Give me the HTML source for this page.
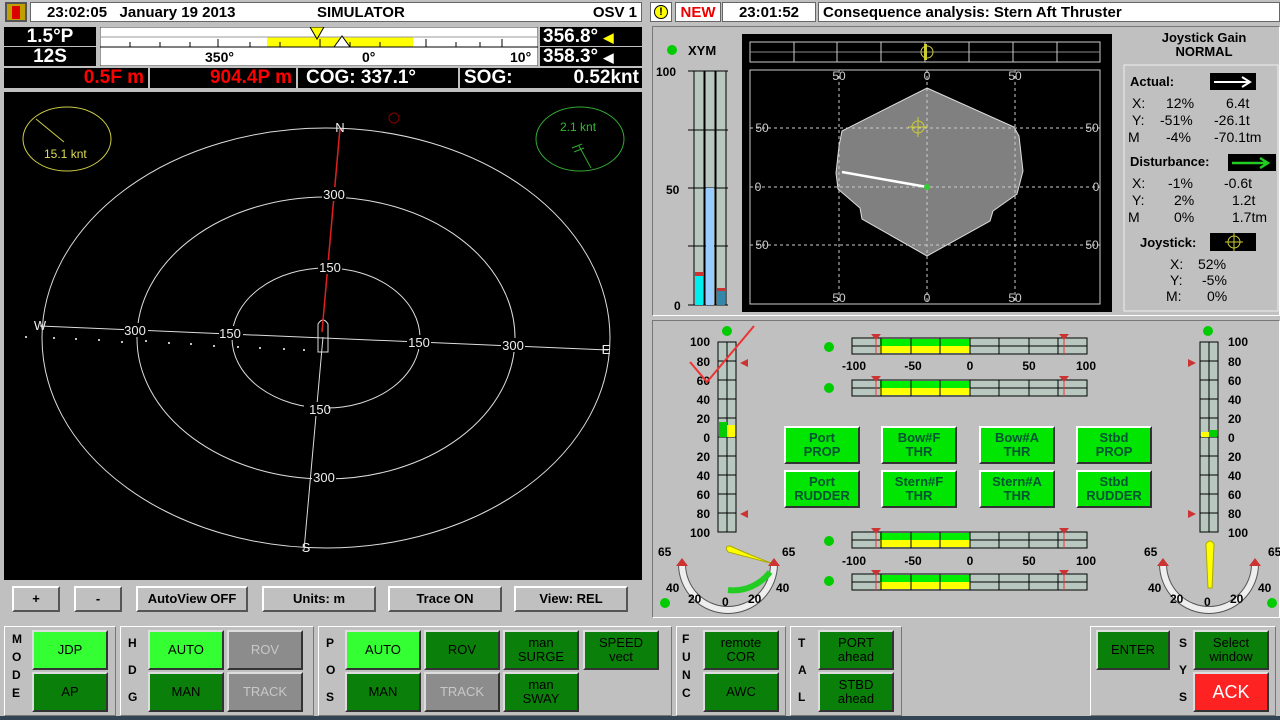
<!DOCTYPE html>
<html><head><meta charset="utf-8"><style>
*{margin:0;padding:0;box-sizing:border-box}
body{width:1280px;height:720px;background:#c0c0c0;position:relative;overflow:hidden;font-family:"Liberation Sans",Arial,sans-serif}
.a{position:absolute}
.blk{position:absolute;background:#000;color:#fff;font-weight:bold;font-size:19px;line-height:20px;white-space:nowrap}
.btn{position:absolute;background:#c0c0c0;border:2px solid;border-color:#fff #555 #555 #fff;font-size:13px;font-weight:bold;color:#000;text-align:center;line-height:22px}
.g{position:absolute;border:2px solid;border-color:#ddd #333 #333 #ddd;font-family:"Liberation Sans Narrow","Liberation Sans",sans-serif;font-size:13px;text-align:center;color:#000;display:flex;align-items:center;justify-content:center;line-height:14px}
.lg{background:#33ff33}.dg{background:#0a800a}.gr{background:#8c8c8c;color:#c8c8c8}
.tb{position:absolute;background:#00e600;border:2px solid;border-color:#fff #333 #333 #fff;font-size:13px;font-weight:bold;text-align:center;line-height:14px;padding-top:3px;color:#053}
.grp{position:absolute;border:1px solid;border-color:#fff #777 #777 #fff;top:626px;height:90px}
.let{position:absolute;font-size:12px;font-weight:bold}
</style></head><body>
<div class="a" style="left:0;top:0;width:1280px;height:24px;background:#c0c0c0"></div>
<div class="a" style="left:5px;top:2px;width:22px;height:20px;background:#c0a000;border:2px solid #555"><div style="margin:2px 0 0 5px;width:8px;height:13px;background:#d00"></div></div>
<div class="a" style="left:30px;top:2px;width:612px;height:20px;background:#fff;border:1px solid #666;font-size:15px;font-weight:bold;line-height:19px;white-space:nowrap">
<span style="position:absolute;left:16px">23:02:05&nbsp;&nbsp;&nbsp;January 19 2013</span><span style="position:absolute;left:286px">SIMULATOR</span><span style="position:absolute;right:4px">OSV 1</span></div>
<div class="a" style="left:650px;top:2px;width:22px;height:20px;background:#fff;border:1px solid #666"><div style="margin:2px 0 0 3px;width:14px;height:14px;border-radius:50%;background:#ff0;border:1px solid #000;font-size:11px;font-weight:bold;text-align:center;line-height:12px">!</div></div>
<div class="a" style="left:675px;top:2px;width:46px;height:20px;background:#fff;border:1px solid #666;color:#e00;font-size:15px;font-weight:bold;line-height:19px;text-align:center">NEW</div>
<div class="a" style="left:722px;top:2px;width:94px;height:20px;background:#fff;border:1px solid #666;font-size:15px;font-weight:bold;line-height:19px;text-align:center">23:01:52</div>
<div class="a" style="left:818px;top:2px;width:462px;height:20px;background:#fff;border:1px solid #666;font-size:15px;font-weight:bold;line-height:19px;padding-left:4px">Consequence analysis: Stern Aft Thruster</div>

<div class="blk" style="left:4px;top:27px;width:92px;height:19px;text-align:center">1.5°P</div>
<div class="blk" style="left:4px;top:47px;width:92px;height:19px;text-align:center">12S</div>
<div class="blk" style="left:540px;top:27px;width:102px;height:19px;padding-left:3px">356.8° <span style="color:#ff0;font-size:13px">◀</span></div>
<div class="blk" style="left:540px;top:47px;width:102px;height:19px;padding-left:3px">358.3° <span style="font-size:13px">◀</span></div>
<svg class="a" style="left:100px;top:27px" width="438" height="39">
<rect width="438" height="39" fill="#fff" stroke="#333"/>
<rect x="167" y="10" width="146" height="10" fill="#ff0"/>
<line x1="0" y1="20" x2="438" y2="20" stroke="#000"/>
<g stroke="#000"><line x1="0" y1="10" x2="438" y2="10" stroke="#999"/>
<path d="M118 12v8M220 12v8M326 12v8M402 12v8M30 15v5M60 15v5M90 15v5M150 15v5M180 15v5M250 15v5M280 15v5M356 15v5M380 15v5"/></g>
<polygon points="210,0 224,0 217,12" fill="#ff0" stroke="#000"/>
<polygon points="242,9 234,20 250,20" fill="#fff" stroke="#000"/>
<g font-size="14" font-weight="bold" font-family="Liberation Sans"><text x="105" y="35">350°</text><text x="262" y="35">0°</text><text x="410" y="35">10°</text></g>
</svg>
<div class="blk" style="left:4px;top:68px;width:144px;height:20px;color:#f00;text-align:right;padding-right:4px">0.5F m</div>
<div class="blk" style="left:150px;top:68px;width:146px;height:20px;color:#f00;text-align:right;padding-right:4px">904.4P m</div>
<div class="blk" style="left:298px;top:68px;width:160px;height:20px;padding-left:8px">COG: 337.1°</div>
<div class="blk" style="left:460px;top:68px;width:182px;height:20px;padding-left:4px">SOG:<span style="position:absolute;right:3px">0.52knt</span></div>

<svg class="a" style="left:4px;top:92px" width="638" height="488" font-family="Liberation Sans" font-size="13">
<rect width="638" height="488" fill="#000"/>
<g fill="none" stroke="#ddd" stroke-width="1">
<ellipse cx="322" cy="246" rx="284" ry="210"/>
<ellipse cx="322" cy="246" rx="189" ry="141"/>
<ellipse cx="322" cy="246" rx="94" ry="70"/>
<line x1="36" y1="234" x2="604" y2="258"/>
<line x1="319" y1="245" x2="300" y2="458"/>
<path d="M314 242 v-10 q5 -8 10 0 v28 h-10z"/>
</g>
<line x1="336" y1="36" x2="318" y2="240" stroke="#e02020" stroke-width="1.5"/>
<g fill="#eee" text-anchor="middle">
<rect x="318" y="95" width="24" height="14" fill="#000"/><text x="330" y="107">300</text>
<rect x="314" y="168" width="24" height="14" fill="#000"/><text x="326" y="180">150</text>
<rect x="308" y="378" width="24" height="14" fill="#000"/><text x="320" y="390">300</text>
<rect x="300" y="310" width="24" height="14" fill="#000"/><text x="316" y="322">150</text>
<rect x="120" y="231" width="24" height="14" fill="#000"/><text x="131" y="243">300</text>
<rect x="215" y="234" width="24" height="14" fill="#000"/><text x="226" y="246">150</text>
<rect x="403" y="243" width="24" height="14" fill="#000"/><text x="415" y="255">150</text>
<rect x="497" y="246" width="24" height="14" fill="#000"/><text x="509" y="258">300</text>
<text x="336" y="40">N</text><text x="302" y="460">S</text><text x="36" y="238">W</text><text x="602" y="262">E</text>
</g>
<g fill="#fff"><circle cx="22" cy="245" r="1"/><circle cx="50" cy="246" r="1"/><circle cx="72" cy="247" r="1"/><circle cx="95" cy="248" r="1"/><circle cx="118" cy="250" r="1"/><circle cx="142" cy="249" r="1"/><circle cx="165" cy="251" r="1"/><circle cx="187" cy="252" r="1"/><circle cx="210" cy="254" r="1"/><circle cx="234" cy="255" r="1"/><circle cx="256" cy="256" r="1"/><circle cx="280" cy="257" r="1"/><circle cx="300" cy="258" r="1"/></g>
<ellipse cx="63" cy="47" rx="44" ry="32" fill="none" stroke="#cc4"/>
<line x1="32" y1="27" x2="60" y2="50" stroke="#cc4"/>
<text x="40" y="66" fill="#dd5" font-size="12">15.1 knt</text>
<ellipse cx="576" cy="47" rx="44" ry="32" fill="none" stroke="#3a3"/>
<path d="M568 56 l10 -4 M570 60 l10 -4 M575 54 l12 22" stroke="#3a3" fill="none"/>
<text x="556" y="39" fill="#3b3" font-size="12">2.1 knt</text>
<circle cx="390" cy="26" r="5" fill="none" stroke="#800"/>
</svg>
<div class="a" style="left:4px;top:582px;width:638px;height:36px;background:#c0c0c0"></div>
<div class="btn" style="left:12px;top:586px;width:48px;height:26px">+</div>
<div class="btn" style="left:74px;top:586px;width:48px;height:26px">-</div>
<div class="btn" style="left:136px;top:586px;width:112px;height:26px">AutoView OFF</div>
<div class="btn" style="left:262px;top:586px;width:114px;height:26px">Units: m</div>
<div class="btn" style="left:388px;top:586px;width:114px;height:26px">Trace ON</div>
<div class="btn" style="left:514px;top:586px;width:114px;height:26px">View: REL</div>

<div class="a" style="left:652px;top:26px;width:628px;height:290px;border:1px solid;border-color:#777 #fff #fff #777"></div>
<svg class="a" style="left:652px;top:26px" width="628" height="292" font-family="Liberation Sans" font-weight="bold" font-size="13">
<circle cx="20" cy="24" r="5" fill="#0c0"/><text x="36" y="29" font-size="13">XYM</text>
<text x="4" y="50" font-size="12">100</text><text x="14" y="168" font-size="12">50</text><text x="22" y="284" font-size="12">0</text>
<g stroke="#000"><rect x="42" y="45" width="10" height="234" fill="#b8c8c0"/><rect x="53" y="45" width="10" height="234" fill="#b8c8c0"/><rect x="64" y="45" width="10" height="234" fill="#b8c8c0"/>
<line x1="36" y1="45" x2="76" y2="45"/><line x1="36" y1="104" x2="76" y2="104"/><line x1="36" y1="162" x2="76" y2="162"/><line x1="36" y1="220" x2="76" y2="220"/><line x1="36" y1="279" x2="76" y2="279"/></g>
<rect x="43" y="250" width="8" height="29" fill="#0ee"/><rect x="43" y="246" width="8" height="4" fill="#c33"/>
<rect x="54" y="162" width="8" height="117" fill="#9cf"/>
<rect x="65" y="265" width="8" height="14" fill="#38a"/><rect x="65" y="262" width="8" height="3" fill="#c33"/>
<rect x="90" y="8" width="370" height="278" fill="#000"/>
<rect x="98" y="16" width="350" height="20" fill="none" stroke="#ccc"/><line x1="98" y1="26" x2="448" y2="26" stroke="#888"/>
<path d="M142 16v20M185 16v20M229 16v20M273 16v20M317 16v20M361 16v20M405 16v20" stroke="#ccc"/>
<circle cx="275" cy="26" r="6" fill="none" stroke="#cc3"/><rect x="272" y="18" width="3" height="16" fill="#cc3"/>
<rect x="98" y="44" width="350" height="234" fill="none" stroke="#ccc"/>
<polygon points="275,62 362,101 367,110 371,145 365,168 341,185 338,195 275,230 210,193 208,182 186,163 184,147 187,120 190,105" fill="#808080" stroke="#ddd"/>
<g stroke="#ccc" stroke-dasharray="3,3"><line x1="187" y1="44" x2="187" y2="278"/><line x1="275" y1="44" x2="275" y2="278"/><line x1="363" y1="44" x2="363" y2="278"/>
<line x1="98" y1="102" x2="448" y2="102"/><line x1="98" y1="161" x2="448" y2="161"/><line x1="98" y1="219" x2="448" y2="219"/></g>
<g fill="#ccc" font-weight="normal" font-size="12" text-anchor="middle"><text x="187" y="54">50</text><text x="275" y="54">0</text><text x="363" y="54">50</text>
<text x="187" y="276">50</text><text x="275" y="276">0</text><text x="363" y="276">50</text>
<text x="110" y="106">50</text><text x="440" y="106">50</text><text x="106" y="165">0</text><text x="444" y="165">0</text><text x="110" y="223">50</text><text x="440" y="223">50</text></g>
<line x1="275" y1="161" x2="190" y2="146" stroke="#fff" stroke-width="2.5"/><circle cx="275" cy="161" r="3" fill="#3c3"/>
<circle cx="266" cy="101" r="6" fill="none" stroke="#cc3"/><path d="M256 101h20M266 91v20" stroke="#cc3"/>
<text x="552" y="16" text-anchor="middle">Joystick Gain</text><text x="552" y="30" text-anchor="middle">NORMAL</text>
<rect x="472" y="39" width="154" height="246" fill="none" stroke="#eee"/>
<text x="478" y="60">Actual:</text><rect x="558" y="47" width="46" height="17" fill="#000"/><path d="M562 56h36M590 51l8 5-8 5" stroke="#fff" stroke-width="2" fill="none"/>
<g font-weight="normal" font-size="14"><text x="480" y="82">X:</text><text x="480" y="99">Y:</text><text x="476" y="116">M</text>
<text x="514" y="82">12%</text><text x="508" y="99">-51%</text><text x="514" y="116">-4%</text>
<text x="574" y="82">6.4t</text><text x="562" y="99">-26.1t</text><text x="562" y="116">-70.1tm</text>
<text x="480" y="162">X:</text><text x="480" y="179">Y:</text><text x="476" y="196">M</text>
<text x="516" y="162">-1%</text><text x="522" y="179">2%</text><text x="522" y="196">0%</text>
<text x="572" y="162">-0.6t</text><text x="580" y="179">1.2t</text><text x="580" y="196">1.7tm</text>
<text x="518" y="243">X:</text><text x="518" y="259">Y:</text><text x="514" y="275">M:</text>
<text x="546" y="243">52%</text><text x="550" y="259">-5%</text><text x="555" y="275">0%</text></g>
<text x="478" y="140">Disturbance:</text><rect x="576" y="128" width="48" height="17" fill="#000"/><path d="M580 137h36M608 132l8 5-8 5" stroke="#2c2" stroke-width="2.5" fill="none"/>
<text x="488" y="221">Joystick:</text><rect x="558" y="207" width="46" height="18" fill="#000"/><circle cx="582" cy="216" r="6" fill="none" stroke="#cc3"/><path d="M573 216h18M582 207v18" stroke="#cc3"/>
</svg>

<div class="a" style="left:652px;top:320px;width:628px;height:298px;border:1px solid;border-color:#777 #fff #fff #777"></div>
<svg class="a" style="left:652px;top:320px" width="628" height="298" font-family="Liberation Sans" font-weight="bold" font-size="12">
<g text-anchor="end"><text x="58" y="26">100</text><text x="58" y="46">80</text><text x="58" y="65">60</text><text x="58" y="84">40</text><text x="58" y="103">20</text><text x="58" y="122">0</text><text x="58" y="141">20</text><text x="58" y="160">40</text><text x="58" y="179">60</text><text x="58" y="198">80</text><text x="58" y="217">100</text></g>
<g text-anchor="start"><text x="576" y="26">100</text><text x="576" y="46">80</text><text x="576" y="65">60</text><text x="576" y="84">40</text><text x="576" y="103">20</text><text x="576" y="122">0</text><text x="576" y="141">20</text><text x="576" y="160">40</text><text x="576" y="179">60</text><text x="576" y="198">80</text><text x="576" y="217">100</text></g>
<g stroke="#000"><rect x="66" y="22" width="9" height="190" fill="#b8c8c0"/><rect x="75" y="22" width="9" height="190" fill="#b8c8c0"/>
<rect x="548" y="22" width="9" height="190" fill="#b8c8c0"/><rect x="557" y="22" width="9" height="190" fill="#b8c8c0"/>
<path d="M66 41h18M66 60h18M66 79h18M66 98h18M66 117h18M66 136h18M66 155h18M66 174h18M66 193h18M548 41h18M548 60h18M548 79h18M548 98h18M548 117h18M548 136h18M548 155h18M548 174h18M548 193h18"/></g>
<rect x="67" y="102" width="8" height="15" fill="#0c0"/><rect x="75" y="105" width="8" height="12" fill="#ff0"/>
<rect x="549" y="112" width="8" height="5" fill="#ff0"/><rect x="557" y="110" width="8" height="7" fill="#0c0"/>
<g fill="#c33"><path d="M88 43l8-4v8zM88 194l8-4v8zM544 43l-8-4v8zM544 194l-8-4v8z"/></g>
<g fill="#0c0"><circle cx="75" cy="11" r="5"/><circle cx="556" cy="11" r="5"/><circle cx="177" cy="27" r="5"/><circle cx="177" cy="68" r="5"/><circle cx="177" cy="221" r="5"/><circle cx="177" cy="261" r="5"/><circle cx="13" cy="283" r="5"/><circle cx="620" cy="283" r="5"/></g>
<path d="M38 42 L55 62 L102 6" stroke="#e33" stroke-width="2" fill="none"/>
<g id="hb">
<rect x="200" y="18" width="235" height="16" fill="#b8c8c0" stroke="#000"/><line x1="200" y1="26" x2="435" y2="26" stroke="#000"/>
<rect x="228" y="19" width="90" height="7" fill="#0e0"/><rect x="228" y="26" width="90" height="7" fill="#ff0"/>
<path d="M229 18v16M259 18v16M288 18v16M318 18v16M347 18v16M377 18v16M406 18v16" stroke="#000"/>
<path d="M224 14v20M412 14v20" stroke="#e33"/><path d="M219 14h10l-5 6zM407 14h10l-5 6z" fill="#c33"/>
</g>
<use href="#hb" y="42"/>
<use href="#hb" y="194"/><use href="#hb" y="236"/>
<g text-anchor="middle" font-size="12"><text x="202" y="50">-100</text><text x="261" y="50">-50</text><text x="318" y="50">0</text><text x="377" y="50">50</text><text x="434" y="50">100</text>
<text x="202" y="245">-100</text><text x="261" y="245">-50</text><text x="318" y="245">0</text><text x="377" y="245">50</text><text x="434" y="245">100</text></g>
<g fill="none" stroke="#555" stroke-width="8"><path d="M30 244 A46 46 0 0 0 122 244"/><path d="M511 244 A46 46 0 0 0 603 244"/></g>
<g fill="none" stroke="#eee" stroke-width="6"><path d="M30 244 A46 46 0 0 0 122 244"/><path d="M511 244 A46 46 0 0 0 603 244"/></g>
<path d="M76 270 A46 46 0 0 0 118 252" fill="none" stroke="#2c2" stroke-width="6"/>
<path d="M78 226 Q100 236 122 244 L76 232 Q72 226 78 226z" fill="#ff0" stroke="#aa0"/>
<path d="M554 224 q4 -6 8 0 l-2 44 h-4z" fill="#ff0" stroke="#aa0"/>
<g fill="#c33"><path d="M24 246l6-8 6 8zM116 246l6-8 6 8zM505 246l6-8 6 8zM597 246l6-8 6 8z"/></g>
<g font-size="12"><text x="6" y="236">65</text><text x="130" y="236">65</text><text x="14" y="272">40</text><text x="124" y="272">40</text><text x="36" y="283">20</text><text x="70" y="286">0</text><text x="96" y="283">20</text>
<text x="492" y="236">65</text><text x="616" y="236">65</text><text x="496" y="272">40</text><text x="606" y="272">40</text><text x="518" y="283">20</text><text x="552" y="286">0</text><text x="578" y="283">20</text></g>
</svg>
<div class="tb" style="left:784px;top:426px;width:76px;height:38px">Port<br>PROP</div>
<div class="tb" style="left:881px;top:426px;width:76px;height:38px">Bow#F<br>THR</div>
<div class="tb" style="left:979px;top:426px;width:76px;height:38px">Bow#A<br>THR</div>
<div class="tb" style="left:1076px;top:426px;width:76px;height:38px">Stbd<br>PROP</div>
<div class="tb" style="left:784px;top:470px;width:76px;height:38px">Port<br>RUDDER</div>
<div class="tb" style="left:881px;top:470px;width:76px;height:38px">Stern#F<br>THR</div>
<div class="tb" style="left:979px;top:470px;width:76px;height:38px">Stern#A<br>THR</div>
<div class="tb" style="left:1076px;top:470px;width:76px;height:38px">Stbd<br>RUDDER</div>

<div class="grp" style="left:4px;width:112px"></div>
<div class="grp" style="left:120px;width:194px"></div>
<div class="grp" style="left:318px;width:354px"></div>
<div class="grp" style="left:676px;width:110px"></div>
<div class="grp" style="left:790px;width:112px"></div>
<div class="grp" style="left:1090px;width:186px"></div>
<div class="let" style="left:12px;top:630px;line-height:18px">M<br>O<br>D<br>E</div>
<div class="let" style="left:128px;top:630px;line-height:27px">H<br>D<br>G</div>
<div class="let" style="left:326px;top:630px;line-height:27px">P<br>O<br>S</div>
<div class="let" style="left:682px;top:630px;line-height:18px">F<br>U<br>N<br>C</div>
<div class="let" style="left:798px;top:630px;line-height:27px">T<br>A<br>L</div>
<div class="let" style="left:1179px;top:630px;line-height:27px">S<br>Y<br>S</div>
<div class="g lg" style="left:32px;top:630px;width:76px;height:40px">JDP</div>
<div class="g dg" style="left:32px;top:672px;width:76px;height:40px">AP</div>
<div class="g lg" style="left:148px;top:630px;width:76px;height:40px">AUTO</div>
<div class="g gr" style="left:227px;top:630px;width:76px;height:40px">ROV</div>
<div class="g dg" style="left:148px;top:672px;width:76px;height:40px">MAN</div>
<div class="g gr" style="left:227px;top:672px;width:76px;height:40px">TRACK</div>
<div class="g lg" style="left:345px;top:630px;width:76px;height:40px">AUTO</div>
<div class="g dg" style="left:424px;top:630px;width:76px;height:40px">ROV</div>
<div class="g dg" style="left:503px;top:630px;width:76px;height:40px">man<br>SURGE</div>
<div class="g dg" style="left:583px;top:630px;width:76px;height:40px">SPEED<br>vect</div>
<div class="g dg" style="left:345px;top:672px;width:76px;height:40px">MAN</div>
<div class="g gr" style="left:424px;top:672px;width:76px;height:40px">TRACK</div>
<div class="g dg" style="left:503px;top:672px;width:76px;height:40px">man<br>SWAY</div>
<div class="g dg" style="left:703px;top:630px;width:76px;height:40px">remote<br>COR</div>
<div class="g dg" style="left:703px;top:672px;width:76px;height:40px">AWC</div>
<div class="g dg" style="left:818px;top:630px;width:76px;height:40px">PORT<br>ahead</div>
<div class="g dg" style="left:818px;top:672px;width:76px;height:40px">STBD<br>ahead</div>
<div class="g dg" style="left:1096px;top:630px;width:74px;height:40px">ENTER</div>
<div class="g dg" style="left:1193px;top:630px;width:76px;height:40px">Select<br>window</div>
<div class="g" style="left:1193px;top:672px;width:76px;height:40px;background:#f22;color:#fff;font-size:18px">ACK</div>
<div class="a" style="left:0;top:716px;width:1280px;height:4px;background:#345"></div>
</body></html>
